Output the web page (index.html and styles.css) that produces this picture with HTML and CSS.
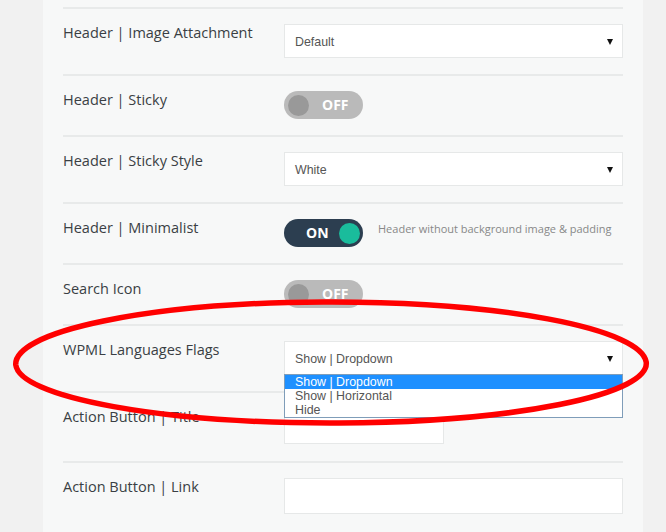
FILE: index.html
```html
<!DOCTYPE html>
<html>
  <head>
    <title>Theme Options</title>
    <meta name="viewport" content="width=device-width, initial-scale=1">
    <link rel="stylesheet" href="styles.css">
  </head>
  <body>
    <div class="panel">
      <div class="row">
        <div class="label">Header | Image Attachment</div>
        <div class="field">
          <div class="select">Default</div>
        </div>
      </div>
      <div class="row">
        <div class="label">Header | Sticky</div>
        <div class="field">
          <div class="switch"><span class="knob"></span><span class="state">OFF</span></div>
        </div>
      </div>
      <div class="row">
        <div class="label">Header | Sticky Style</div>
        <div class="field">
          <div class="select">White</div>
        </div>
      </div>
      <div class="row">
        <div class="label">Header | Minimalist</div>
        <div class="field">
          <div class="switch on"><span class="state">ON</span><span class="knob"></span></div>
          <span class="hint">Header without background image &amp; padding</span>
        </div>
      </div>
      <div class="row">
        <div class="label">Search Icon</div>
        <div class="field">
          <div class="switch"><span class="knob"></span><span class="state">OFF</span></div>
        </div>
      </div>
      <div class="row">
        <div class="label">WPML Languages Flags</div>
        <div class="field">
          <div class="select open">Show | Dropdown
            <ul class="options">
              <li class="selected">Show | Dropdown</li>
              <li>Show | Horizontal</li>
              <li>Hide</li>
            </ul>
          </div>
        </div>
      </div>
      <div class="row row-text">
        <div class="label">Action Button | Title</div>
        <div class="field">
          <input class="text short" type="text">
        </div>
      </div>
      <div class="row row-text">
        <div class="label">Action Button | Link</div>
        <div class="field">
          <input class="text" type="text">
        </div>
      </div>
    </div>
    <svg class="mark" width="666" height="532" viewBox="0 0 666 532">
      <path d="M15.8 365 A315.3 62 0 0 1 646.2 362 A315.3 59.5 0 0 1 15.8 365 Z" fill="none" stroke="#ff0000" stroke-width="5.5"/>
    </svg>
  </body>
</html>
```

FILE: styles.css
```css
html {font-family: "Open Sans", "Noto Sans", sans-serif;}
body {margin: 0; background-color: #f1f1f1; color: #3a3f44; overflow: hidden;}
.panel {margin-left: 43px; width: 600px; min-height: 532px; box-sizing: border-box; padding: 7px 20px 0; background-color: #f7f8f8;}
.row {display: flex; align-items: flex-start; border-top: 2px solid #e8eaea; padding: 15px 0 16px;}
.row-text {padding-bottom: 17px;}
.label {width: 221px; flex: none; font-size: 14.5px; line-height: 18px; margin-bottom: -4px;}
.field {flex: 1; display: flex; align-items: flex-start;}
.select {position: relative; flex: 1; height: 34px; box-sizing: border-box; border: 1px solid #e6e8e8; background: #fff; padding: 1px 10px 0; display: flex; align-items: center; font-family: "Liberation Sans", Arial, sans-serif; font-size: 12.4px; color: #555;}
.select:after {content: ""; position: absolute; right: 9px; top: 14px; border-left: 3px solid transparent; border-right: 3px solid transparent; border-top: 6px solid #111;}
.options {position: absolute; top: 100%; left: -1px; right: -1px; margin: 0; padding: 0; list-style: none; background: #fff; border: 1px solid #7f9db9; z-index: 2;}
.options li {height: 14px; line-height: 14px; padding-left: 10px;}
.options li.selected {background-color: #1e90ff; color: #fff;}
.switch {width: 79px; height: 28px; border-radius: 14px; background-color: #bababa; display: flex; align-items: center; flex: none;}
.switch .knob {width: 21px; height: 21px; border-radius: 50%; background-color: #999; margin-left: 4px;}
.switch .state {color: #fff; font-weight: bold; font-size: 14px; line-height: 14px; margin-left: 13px;}
.switch.on {background-color: #2c3e50;}
.switch.on .state {margin-left: 22px;}
.switch.on .knob {background-color: #1abc9c; margin-left: 10px;}
.hint {margin-left: 15px; font-size: 11px; line-height: 19px; color: #888;}
.text {height: 36px; box-sizing: border-box; border: 1px solid #e6e8e8; background: #fff; flex: 1; margin: 0; outline: none;}
.text.short {flex: none; width: 160px;}
.mark {position: absolute; left: 0; top: 0; pointer-events: none; z-index: 5;}
```
